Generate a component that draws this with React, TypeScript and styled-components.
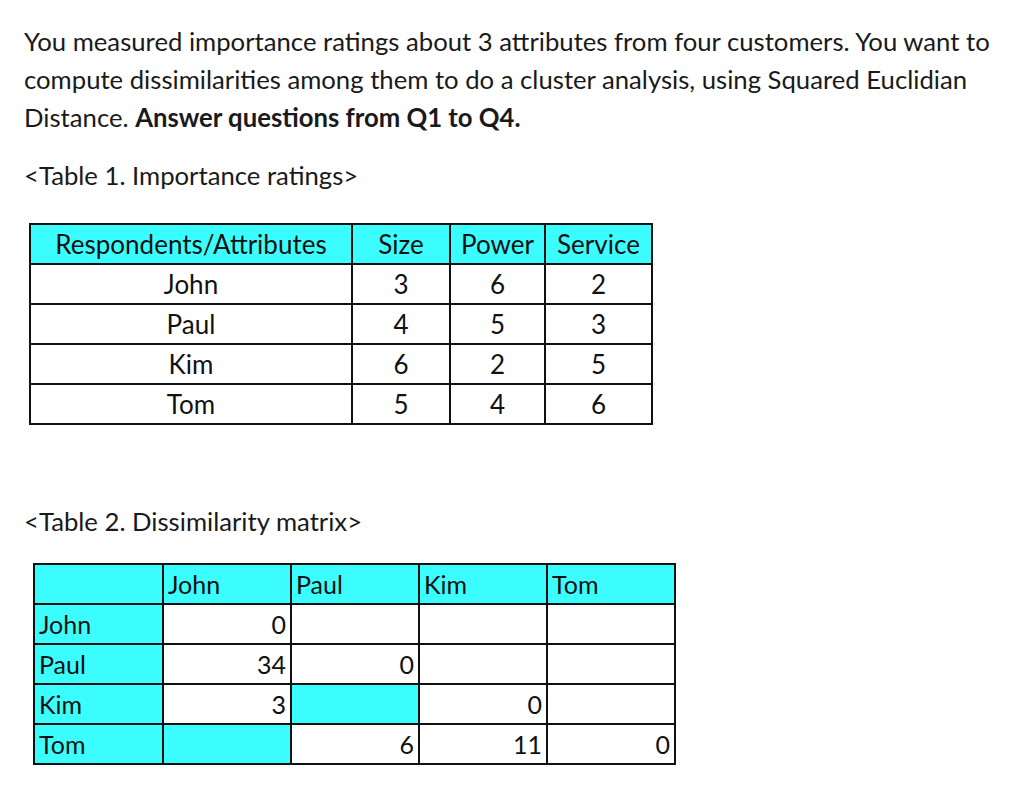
import styled, { createGlobalStyle } from "styled-components";

const GlobalStyle = createGlobalStyle`
  body {
    margin: 0;
    background: #fff;
    color: #1a1a1a;
    font-family: Lato, "Noto Sans", sans-serif;
  }
`;

const Page = styled.div`
  padding: 22px 24px 0 24px;
  width: 1010px;
  box-sizing: border-box;
`;

const Paragraph = styled.p`
  margin: 0;
  font-size: 25.7px;
  line-height: 38px;
  white-space: nowrap;
`;

const Caption = styled.p<{ $top: number }>`
  margin: ${(p) => p.$top}px 0 0 0;
  font-size: 25.7px;
  line-height: 38px;
`;

const Sheet = styled.table<{ $top: number; $left: number; $size: number }>`
  border-collapse: collapse;
  margin: ${(p) => p.$top}px 0 0 ${(p) => p.$left}px;
  font-family: Lato, "Noto Sans", sans-serif;
  font-size: ${(p) => p.$size}px;
  color: #111;
`;

const Cell = styled.td<{ $w: number; $cyan?: boolean; $align?: string }>`
  width: ${(p) => p.$w}px;
  height: 40px;
  padding: 0 4px;
  box-sizing: border-box;
  border: 2px solid #111;
  background: ${(p) => (p.$cyan ? "#3cfdfd" : "#fff")};
  text-align: ${(p) => p.$align || "center"};
  line-height: 1;
`;

const ratings = [
  ["John", "3", "6", "2"],
  ["Paul", "4", "5", "3"],
  ["Kim", "6", "2", "5"],
  ["Tom", "5", "4", "6"],
];
const widths1 = [322, 98, 95, 107];

const names = ["John", "Paul", "Kim", "Tom"];
const matrix: (string | null)[][] = [
  ["0", "", "", ""],
  ["34", "0", "", ""],
  ["3", null, "0", ""],
  [null, "6", "11", "0"],
];

export default function App() {
  return (
    <Page>
      <GlobalStyle />
      <Paragraph>
        You measured importance ratings about 3 attributes from four customers. You want to
        <br />
        compute dissimilarities among them to do a cluster analysis, using Squared Euclidian
        <br />
        Distance. <b>Answer questions from Q1 to Q4.</b>
      </Paragraph>
      <Caption $top={20}>&lt;Table 1. Importance ratings&gt;</Caption>
      <Sheet $top={29} $left={5} $size={26}>
        <tbody>
          <tr>
            {["Respondents/Attributes", "Size", "Power", "Service"].map((h, i) => (
              <Cell key={h} $w={widths1[i]} $cyan>
                {h}
              </Cell>
            ))}
          </tr>
          {ratings.map((row) => (
            <tr key={row[0]}>
              {row.map((v, i) => (
                <Cell key={i} $w={widths1[i]}>
                  {v}
                </Cell>
              ))}
            </tr>
          ))}
        </tbody>
      </Sheet>
      <Caption $top={77}>&lt;Table 2. Dissimilarity matrix&gt;</Caption>
      <Sheet $top={23} $left={9} $size={25}>
        <tbody>
          <tr>
            <Cell $w={129} $cyan />
            {names.map((n) => (
              <Cell key={n} $w={128} $cyan $align="left">
                {n}
              </Cell>
            ))}
          </tr>
          {names.map((n, r) => (
            <tr key={n}>
              <Cell $w={129} $cyan $align="left">
                {n}
              </Cell>
              {matrix[r].map((v, c) => (
                <Cell key={c} $w={128} $cyan={v === null} $align="right">
                  {v}
                </Cell>
              ))}
            </tr>
          ))}
        </tbody>
      </Sheet>
    </Page>
  );
}
